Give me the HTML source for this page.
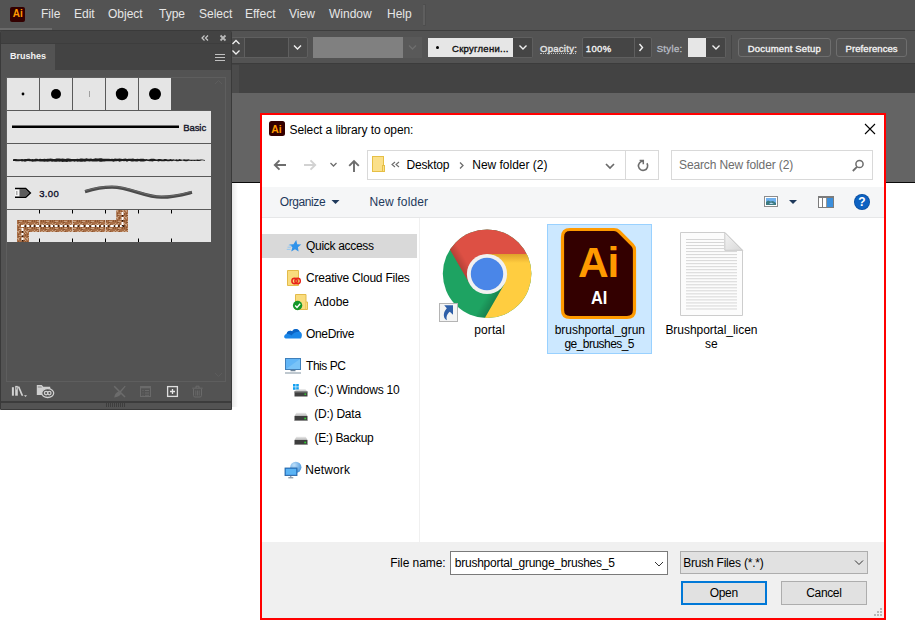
<!DOCTYPE html>
<html><head><meta charset="utf-8">
<style>
*{box-sizing:border-box}
html,body{margin:0;padding:0}
body{width:915px;height:639px;overflow:hidden;position:relative;background:#fff;font-family:"Liberation Sans",sans-serif}
.a{position:absolute}
.t{position:absolute;white-space:nowrap;line-height:1}
.ai{-webkit-text-stroke:0.35px currentColor}
svg{position:absolute;overflow:visible}
</style></head><body>

<!-- ===== Illustrator app frame ===== -->
<div class="a" style="left:0;top:0;width:915px;height:30px;background:#535353"></div>
<div class="a" style="left:0;top:30px;width:915px;height:1px;background:#3e3e3e"></div>
<div class="a" style="left:0;top:31px;width:915px;height:32px;background:#535353"></div>
<div class="a" style="left:0;top:63px;width:915px;height:1px;background:#3c3c3c"></div>
<div class="a" style="left:0;top:64px;width:915px;height:29px;background:#434343"></div>
<div class="a" style="left:232px;top:65px;width:7px;height:28px;background:#4b4b4b"></div>
<div class="a" style="left:0;top:93px;width:915px;height:89px;background:#646464"></div>
<div class="a" style="left:0;top:182px;width:915px;height:1px;background:#0a0a0a"></div>
<div class="a" style="left:232px;top:183px;width:6px;height:224px;background:linear-gradient(to right,rgba(0,0,0,0.09),rgba(0,0,0,0))"></div>

<!-- menu bar -->
<div class="a" style="left:10px;top:7px;width:15px;height:15px;background:#330000;border-radius:2px"></div>
<div class="t" style="left:12.8px;top:9.3px;font-size:10px;font-weight:bold;color:#ff9a00">Ai</div>
<div id="menu" style="color:#e6e6e6;font-size:12px">
<div class="t" style="left:41px;top:8px">File</div>
<div class="t" style="left:74px;top:8px">Edit</div>
<div class="t" style="left:108px;top:8px">Object</div>
<div class="t" style="left:159px;top:8px">Type</div>
<div class="t" style="left:199px;top:8px">Select</div>
<div class="t" style="left:245px;top:8px">Effect</div>
<div class="t" style="left:289px;top:8px">View</div>
<div class="t" style="left:329px;top:8px">Window</div>
<div class="t" style="left:387px;top:8px">Help</div>
</div>
<div class="a" style="left:422.5px;top:4px;width:3px;height:22px;background:#4d4d4d;border-radius:1px"></div><div class="a" style="left:423px;top:5px;width:2px;height:20px;background:#5e5e5e"></div>
<div class="a" style="left:0;top:28px;width:52px;height:2px;background:#6a6a6a"></div>

<!-- control bar -->
<div class="a" style="left:231px;top:37px;width:77px;height:21px;border:1px solid #5f5f5f;border-radius:2px;background:#4a4a4a"></div>
<div class="a" style="left:244px;top:38px;width:45px;height:19px;background:#434343;border-left:1px solid #5f5f5f;border-right:1px solid #5f5f5f"></div>
<svg style="left:0;top:0" width="915" height="64">
 <polyline points="232.5,44 236,40.5 239.5,44" fill="none" stroke="#f0f0f0" stroke-width="1.3"/>
 <polyline points="232.5,50.5 236,54 239.5,50.5" fill="none" stroke="#f0f0f0" stroke-width="1.3"/>
 <polyline points="294,45.5 297.5,49 301,45.5" fill="none" stroke="#f0f0f0" stroke-width="1.4"/>
</svg>
<div class="a" style="left:313px;top:37px;width:90px;height:21px;background:#808080"></div>
<div class="a" style="left:403px;top:37px;width:19px;height:21px;background:#595959"></div>
<svg style="left:0;top:0" width="915" height="64">
 <polyline points="409,45.5 412.5,49 416,45.5" fill="none" stroke="#6e6e6e" stroke-width="1.4"/>
</svg>
<div class="a" style="left:428px;top:38px;width:86px;height:19px;background:#e6e6e6"></div>
<div class="a" style="left:436px;top:46px;width:3px;height:3px;background:#000;border-radius:50%"></div>
<div class="t ai" style="left:452px;top:44px;font-size:9.5px;letter-spacing:0.27px;color:#101010">Скруглени...</div>
<div class="a" style="left:513px;top:37px;width:20px;height:21px;border:1px solid #5f5f5f;border-left:none;border-radius:0 2px 2px 0;background:#454545"></div>
<svg style="left:0;top:0" width="915" height="64">
 <polyline points="519.5,45.5 523,49 526.5,45.5" fill="none" stroke="#f0f0f0" stroke-width="1.4"/>
</svg>
<div class="t ai" style="left:540px;top:44px;font-size:9.5px;letter-spacing:0.28px;color:#e4e4e4">Opacity:</div>
<div class="a" style="left:540px;top:53px;width:36px;height:1px;border-top:1px dotted #bdbdbd"></div>
<div class="a" style="left:582px;top:37px;width:70px;height:21px;border:1px solid #5f5f5f;border-radius:2px;background:#454545"></div>
<div class="a" style="left:634px;top:38px;width:1px;height:19px;background:#5f5f5f"></div>
<div class="t ai" style="left:585.8px;top:44px;font-size:9.5px;letter-spacing:0.33px;color:#f4f4f4">100%</div>
<svg style="left:0;top:0" width="915" height="64">
 <polyline points="639.5,44 642.5,47.5 639.5,51" fill="none" stroke="#f0f0f0" stroke-width="1.4"/>
</svg>
<div class="t ai" style="left:656.7px;top:44px;font-size:9.5px;letter-spacing:0.34px;color:#b6bac2">Style:</div>
<div class="a" style="left:688px;top:38px;width:19px;height:19px;background:#e6e6e6"></div>
<div class="a" style="left:706px;top:37px;width:20px;height:21px;border:1px solid #5f5f5f;border-left:none;border-radius:0 2px 2px 0;background:#454545"></div>
<svg style="left:0;top:0" width="915" height="64">
 <polyline points="712.5,45.5 716,49 719.5,45.5" fill="none" stroke="#f0f0f0" stroke-width="1.4"/>
</svg>
<div class="a" style="left:731px;top:35px;width:1px;height:24px;background:#464646"></div>
<div class="a" style="left:738px;top:38px;width:93px;height:19px;border:1px solid #6e6e6e;border-radius:3px"></div>
<div class="t ai" style="left:747.8px;top:44px;font-size:9.5px;letter-spacing:0.17px;color:#f2f2f2">Document Setup</div>
<div class="a" style="left:836px;top:38px;width:71px;height:19px;border:1px solid #6e6e6e;border-radius:3px"></div>
<div class="t ai" style="left:845.6px;top:44px;font-size:9.5px;letter-spacing:0.08px;color:#f2f2f2">Preferences</div>

<!-- ===== Brushes panel ===== -->
<div class="a" style="left:0;top:30px;width:232px;height:380px;background:#535353;border:1px solid #3a3a3a;border-radius:3px 3px 0 0"></div>
<div class="a" style="left:1px;top:31px;width:230px;height:12px;background:#434343;border-radius:2px 2px 0 0"></div>
<div class="a" style="left:1px;top:43px;width:230px;height:1px;background:#3d3d3d"></div>
<div class="a" style="left:55px;top:44px;width:176px;height:26px;background:#434343"></div>
<div class="t" style="left:10px;top:52.3px;font-size:9px;font-weight:bold;color:#f2f2f2">Brushes</div>
<svg style="left:0;top:0" width="232" height="410">
 <!-- collapse << -->
 <polyline points="204.5,35.5 202,38 204.5,40.5" fill="none" stroke="#c8c8c8" stroke-width="1.2"/>
 <polyline points="208,35.5 205.5,38 208,40.5" fill="none" stroke="#c8c8c8" stroke-width="1.2"/>
 <!-- close x -->
 <path d="M220.5,35.5 L225.5,40.5 M225.5,35.5 L220.5,40.5" stroke="#b8b8b8" stroke-width="1.8"/>
 <!-- hamburger -->
 <path d="M215,54.5 H225 M215,57.5 H225 M215,60.5 H225" stroke="#c0c0c0" stroke-width="1"/>
</svg>
<!-- scroll area border -->
<div class="a" style="left:6px;top:77px;width:220px;height:305px;border:1px solid #5e5e5e"></div>
<svg style="left:0;top:0" width="232" height="410">
 <polyline points="215,84 218.5,80.5 222,84" fill="none" stroke="#5c5c5c" stroke-width="1"/>
 <polyline points="215,373 218.5,376.5 222,373" fill="none" stroke="#5c5c5c" stroke-width="1"/>
</svg>
<!-- brush cells -->
<div class="a" style="left:7px;top:78px;width:164px;height:32px;background:#e5e5e5"></div>
<div class="a" style="left:39px;top:78px;width:1px;height:32px;background:#5a5a5a"></div>
<div class="a" style="left:72px;top:78px;width:1px;height:32px;background:#5a5a5a"></div>
<div class="a" style="left:105px;top:78px;width:1px;height:32px;background:#5a5a5a"></div>
<div class="a" style="left:138px;top:78px;width:1px;height:32px;background:#5a5a5a"></div>
<svg style="left:0;top:0" width="232" height="410">
 <circle cx="23" cy="94" r="1.4" fill="#000"/>
 <circle cx="56" cy="94" r="5" fill="#000"/>
 <line x1="89.5" y1="91" x2="89.5" y2="97" stroke="#a0a0a0" stroke-width="1"/>
 <circle cx="122" cy="94" r="6.2" fill="#000"/>
 <circle cx="155" cy="94" r="6" fill="#000"/>
</svg>
<!-- list rows -->
<div class="a" style="left:7px;top:110px;width:204px;height:132px;background:#e5e5e5"></div>
<div class="a" style="left:7px;top:110px;width:204px;height:1px;background:#595959"></div>
<div class="a" style="left:7px;top:143px;width:204px;height:1px;background:#595959"></div>
<div class="a" style="left:7px;top:176px;width:204px;height:1px;background:#595959"></div>
<div class="a" style="left:7px;top:209px;width:204px;height:1px;background:#595959"></div>
<div class="t ai" style="left:183.3px;top:123px;font-size:9.5px;letter-spacing:-0.1px;color:#141428">Basic</div>
<div class="t ai" style="left:39.2px;top:189px;font-size:9.5px;letter-spacing:0.33px;color:#10102a">3.00</div>
<svg style="left:0;top:0" width="232" height="410">
 <rect x="12" y="125.5" width="167" height="2.5" fill="#000"/>
 <path d="M13.0,159.18 L14.5,158.94 L16.0,159.01 L17.5,159.34 L19.0,159.35 L20.5,159.32 L22.0,159.06 L23.5,159.26 L25.0,158.90 L26.5,158.93 L28.0,158.64 L29.5,158.71 L31.0,159.20 L32.5,159.07 L34.0,159.15 L35.5,158.82 L37.0,158.87 L38.5,159.20 L40.0,158.75 L41.5,159.00 L43.0,158.89 L44.5,158.63 L46.0,159.00 L47.5,158.79 L49.0,158.63 L50.5,158.39 L52.0,158.78 L53.5,158.97 L55.0,159.04 L56.5,158.53 L58.0,158.45 L59.5,158.57 L61.0,158.64 L62.5,158.45 L64.0,158.70 L65.5,158.99 L67.0,158.57 L68.5,158.44 L70.0,158.74 L71.5,158.99 L73.0,158.88 L74.5,158.95 L76.0,158.89 L77.5,158.70 L79.0,158.91 L80.5,158.58 L82.0,158.39 L83.5,158.76 L85.0,158.70 L86.5,158.27 L88.0,158.81 L89.5,158.77 L91.0,158.51 L92.5,158.92 L94.0,158.66 L95.5,158.25 L97.0,158.55 L98.5,158.44 L100.0,158.28 L101.5,158.29 L103.0,158.63 L104.5,158.83 L106.0,158.86 L107.5,158.75 L109.0,158.66 L110.5,158.91 L112.0,158.85 L113.5,158.92 L115.0,158.52 L116.5,158.79 L118.0,158.73 L119.5,158.41 L121.0,158.70 L122.5,158.98 L124.0,158.82 L125.5,158.50 L127.0,159.08 L128.5,158.75 L130.0,158.76 L131.5,158.79 L133.0,158.58 L134.5,159.02 L136.0,159.11 L137.5,158.87 L139.0,159.04 L140.5,158.72 L142.0,158.71 L143.5,158.76 L145.0,159.19 L146.5,159.12 L148.0,159.38 L149.5,159.24 L151.0,158.77 L152.5,158.80 L154.0,158.81 L155.5,159.35 L157.0,159.38 L158.5,159.11 L160.0,158.97 L161.5,159.13 L163.0,159.54 L164.5,158.98 L166.0,159.12 L167.5,159.53 L169.0,159.44 L170.5,159.02 L172.0,159.43 L173.5,159.22 L175.0,159.66 L176.5,159.13 L178.0,159.68 L179.5,159.11 L181.0,159.56 L182.5,159.73 L184.0,159.16 L185.5,159.48 L187.0,159.56 L188.5,159.30 L190.0,159.72 L191.5,159.74 L193.0,159.73 L194.5,159.84 L196.0,159.69 L197.5,159.54 L199.0,159.67 L200.5,159.62 L202.0,159.61 L203.5,159.68 L205.0,160.00 L205.0,160.86 L203.5,160.45 L202.0,160.35 L200.5,160.73 L199.0,161.02 L197.5,161.03 L196.0,160.74 L194.5,161.07 L193.0,160.75 L191.5,160.88 L190.0,160.70 L188.5,160.66 L187.0,161.14 L185.5,161.20 L184.0,161.01 L182.5,160.58 L181.0,160.97 L179.5,161.06 L178.0,161.20 L176.5,161.20 L175.0,160.75 L173.5,160.78 L172.0,161.34 L170.5,160.96 L169.0,161.26 L167.5,161.26 L166.0,161.06 L164.5,161.28 L163.0,161.20 L161.5,161.31 L160.0,161.10 L158.5,161.40 L157.0,160.92 L155.5,160.95 L154.0,161.06 L152.5,161.50 L151.0,161.13 L149.5,161.31 L148.0,161.03 L146.5,160.86 L145.0,161.21 L143.5,161.38 L142.0,161.43 L140.5,161.57 L139.0,161.04 L137.5,161.44 L136.0,161.44 L134.5,161.17 L133.0,161.41 L131.5,161.62 L130.0,160.96 L128.5,161.05 L127.0,161.63 L125.5,161.08 L124.0,161.17 L122.5,161.06 L121.0,161.34 L119.5,161.71 L118.0,161.11 L116.5,161.28 L115.0,161.16 L113.5,161.68 L112.0,161.34 L110.5,161.20 L109.0,161.14 L107.5,161.21 L106.0,161.15 L104.5,161.55 L103.0,161.38 L101.5,161.66 L100.0,161.65 L98.5,161.15 L97.0,161.54 L95.5,161.60 L94.0,161.52 L92.5,161.42 L91.0,161.31 L89.5,161.47 L88.0,161.30 L86.5,161.25 L85.0,161.77 L83.5,161.44 L82.0,161.76 L80.5,161.78 L79.0,161.49 L77.5,161.79 L76.0,161.36 L74.5,161.73 L73.0,161.28 L71.5,161.53 L70.0,161.68 L68.5,161.42 L67.0,161.92 L65.5,161.72 L64.0,161.70 L62.5,161.90 L61.0,161.57 L59.5,161.67 L58.0,161.48 L56.5,161.66 L55.0,161.74 L53.5,161.62 L52.0,161.81 L50.5,161.36 L49.0,161.43 L47.5,161.83 L46.0,161.61 L44.5,161.69 L43.0,161.40 L41.5,161.59 L40.0,161.47 L38.5,161.30 L37.0,161.19 L35.5,161.39 L34.0,161.53 L32.5,161.68 L31.0,161.18 L29.5,161.28 L28.0,161.10 L26.5,161.33 L25.0,161.70 L23.5,161.18 L22.0,161.58 L20.5,161.05 L19.0,161.28 L17.5,161.31 L16.0,161.19 L14.5,160.97 L13.0,161.01 Z" fill="#1c1c1c"/>
 <!-- calligraphic icon -->
 <rect x="15" y="189" width="4.5" height="8" fill="#f6f6f6"/>
 <path d="M19.5,189.2 H25.5 L29.6,192.9 L25.5,196.6 H19.5 Z" fill="#5c5c5c"/>
 <path d="M15,188.5 H25.7 L30.4,192.9 L25.7,197.3 H15" fill="none" stroke="#000" stroke-width="1.4"/>
 <rect x="16.2" y="191" width="1.2" height="4" fill="#9a9a9a"/>
 <!-- wave -->
 <path d="M85,191.6 C95,188.6 103,187.2 112,187.2 C130,187.4 145,197.2 161.3,197.2 C174,197.2 183,194.6 192,192.3" fill="none" stroke="#4a4a4a" stroke-width="3.2"/>
 <path d="M85,190.8 C95,187.8 103,186.4 112,186.4 C130,186.6 145,196.4 161.3,196.4 C174,196.4 183,193.8 192,191.5" fill="none" stroke="#6a6a6a" stroke-width="1"/>
 <!-- pattern brush ticks -->
 <path d="M39.5,210 V213.5 M72.5,210 V213.5 M105.5,210 V213.5 M138.5,210 V213.5 M171.5,210 V213.5 M39.5,238.5 V242 M72.5,238.5 V242 M105.5,238.5 V242 M138.5,238.5 V242 M171.5,238.5 V242" stroke="#000" stroke-width="1"/>
 <!-- pattern frame -->
 <defs><pattern id="tex" x="0" y="0" width="9" height="7" patternUnits="userSpaceOnUse"><rect width="9" height="7" fill="#a86e46"/><rect x="0" y="0" width="1" height="1" fill="#c8a080"/><rect x="2" y="0" width="1" height="1" fill="#8c5530"/><rect x="5" y="0" width="1" height="1" fill="#c8a080"/><rect x="6" y="0" width="1" height="1" fill="#c8a080"/><rect x="8" y="0" width="1" height="1" fill="#c8a080"/><rect x="0" y="1" width="1" height="1" fill="#c8a080"/><rect x="2" y="1" width="1" height="1" fill="#8c5530"/><rect x="4" y="1" width="1" height="1" fill="#8c5530"/><rect x="6" y="1" width="1" height="1" fill="#c8a080"/><rect x="3" y="2" width="1" height="1" fill="#c8a080"/><rect x="6" y="2" width="1" height="1" fill="#8c5530"/><rect x="7" y="2" width="1" height="1" fill="#c8a080"/><rect x="0" y="3" width="1" height="1" fill="#8c5530"/><rect x="5" y="3" width="1" height="1" fill="#8c5530"/><rect x="7" y="3" width="1" height="1" fill="#8c5530"/><rect x="1" y="4" width="1" height="1" fill="#c8a080"/><rect x="2" y="4" width="1" height="1" fill="#c8a080"/><rect x="3" y="4" width="1" height="1" fill="#c8a080"/><rect x="5" y="4" width="1" height="1" fill="#8c5530"/><rect x="7" y="4" width="1" height="1" fill="#8c5530"/><rect x="0" y="5" width="1" height="1" fill="#8c5530"/><rect x="1" y="5" width="1" height="1" fill="#8c5530"/><rect x="1" y="6" width="1" height="1" fill="#c8a080"/><rect x="7" y="6" width="1" height="1" fill="#c8a080"/></pattern></defs>
 <path d="M17,220 H116.2 V210 H128 V232 H29 V242 H17 Z" fill="url(#tex)"/>
 <path d="M39.5,220 V232 M72.5,220 V232 M105.5,220 V232" stroke="#e0c8b8" stroke-width="0.8"/>
 <rect x="21.0" y="225" width="3.5" height="2" fill="#fff"/><rect x="24.5" y="225.3" width="1.6" height="1.6" fill="#2a1206"/><rect x="26.6" y="225" width="3" height="2" fill="#fff"/><rect x="29.6" y="225.3" width="1.6" height="1.6" fill="#2a1206"/><rect x="31.2" y="225" width="2.5" height="2" fill="#fff"/><rect x="33.7" y="225.3" width="1.6" height="1.6" fill="#2a1206"/><rect x="35.8" y="225" width="3.5" height="2" fill="#fff"/><rect x="39.3" y="225.3" width="1.6" height="1.6" fill="#2a1206"/><rect x="41.4" y="225" width="2.5" height="2" fill="#fff"/><rect x="43.9" y="225.3" width="1.6" height="1.6" fill="#2a1206"/><rect x="46.0" y="225" width="2.5" height="2" fill="#fff"/><rect x="48.5" y="225.3" width="1.6" height="1.6" fill="#2a1206"/><rect x="50.6" y="225" width="2.5" height="2" fill="#fff"/><rect x="53.1" y="225.3" width="1.6" height="1.6" fill="#2a1206"/><rect x="54.7" y="225" width="3" height="2" fill="#fff"/><rect x="57.7" y="225.3" width="1.6" height="1.6" fill="#2a1206"/><rect x="59.8" y="225" width="3" height="2" fill="#fff"/><rect x="62.8" y="225.3" width="1.6" height="1.6" fill="#2a1206"/><rect x="64.4" y="225" width="2.5" height="2" fill="#fff"/><rect x="66.9" y="225.3" width="1.6" height="1.6" fill="#2a1206"/><rect x="69.5" y="225" width="3.5" height="2" fill="#fff"/><rect x="73.0" y="225.3" width="1.6" height="1.6" fill="#2a1206"/><rect x="74.6" y="225" width="3" height="2" fill="#fff"/><rect x="77.6" y="225.3" width="1.6" height="1.6" fill="#2a1206"/><rect x="80.2" y="225" width="3.5" height="2" fill="#fff"/><rect x="83.7" y="225.3" width="1.6" height="1.6" fill="#2a1206"/><rect x="85.8" y="225" width="3.5" height="2" fill="#fff"/><rect x="89.3" y="225.3" width="1.6" height="1.6" fill="#2a1206"/><rect x="91.4" y="225" width="3.5" height="2" fill="#fff"/><rect x="94.9" y="225.3" width="1.6" height="1.6" fill="#2a1206"/><rect x="96.5" y="225" width="2.5" height="2" fill="#fff"/><rect x="99.0" y="225.3" width="1.6" height="1.6" fill="#2a1206"/><rect x="101.1" y="225" width="2.5" height="2" fill="#fff"/><rect x="103.6" y="225.3" width="1.6" height="1.6" fill="#2a1206"/><rect x="105.2" y="225" width="2.5" height="2" fill="#fff"/><rect x="107.7" y="225.3" width="1.6" height="1.6" fill="#2a1206"/><rect x="110.3" y="225" width="3.5" height="2" fill="#fff"/><rect x="113.8" y="225.3" width="1.6" height="1.6" fill="#2a1206"/><rect x="115.4" y="225" width="2.5" height="2" fill="#fff"/><rect x="117.9" y="225.3" width="1.6" height="1.6" fill="#2a1206"/><rect x="120.0" y="225" width="3" height="2" fill="#fff"/><rect x="123.0" y="225.3" width="1.6" height="1.6" fill="#2a1206"/><rect x="21.5" y="228.0" width="2" height="3" fill="#fff"/><rect x="21.8" y="231.0" width="1.5" height="1.5" fill="#2a1206"/><rect x="21.5" y="233.0" width="2" height="2.5" fill="#fff"/><rect x="21.8" y="235.5" width="1.5" height="1.5" fill="#2a1206"/><rect x="21.5" y="237.5" width="2" height="2.5" fill="#fff"/><rect x="21.8" y="240.0" width="1.5" height="1.5" fill="#2a1206"/><rect x="121.5" y="212.0" width="2" height="3" fill="#fff"/><rect x="121.8" y="215.0" width="1.5" height="1.5" fill="#2a1206"/><rect x="121.5" y="217.0" width="2" height="3" fill="#fff"/><rect x="121.8" y="220.0" width="1.5" height="1.5" fill="#2a1206"/><rect x="121.5" y="222.0" width="2" height="3" fill="#fff"/><rect x="121.8" y="225.0" width="1.5" height="1.5" fill="#2a1206"/>
</svg>
<!-- footer icons -->
<svg style="left:0;top:0" width="232" height="410">
 <!-- library -->
 <rect x="11.9" y="387.2" width="2" height="8.5" fill="#d2d2d2"/>
 <rect x="15.2" y="385.9" width="2.6" height="9.8" fill="#d2d2d2"/>
 <rect x="16.1" y="387.3" width="0.9" height="2.2" fill="#8a8a8a"/>
 <path d="M17.6,386.6 H19.4 L23.3,395.7 H21.5 Z" fill="#d2d2d2"/>
 <path d="M24,395.2 H27 L25.5,396.9 Z" fill="#d2d2d2"/>
 <!-- CC folder -->
 <path d="M36.8,385 H41.8 L43.3,386.8 H50.2 V395 H36.8 Z" fill="#cfcfcf"/>
 <path d="M37.8,386.6 H41.3 L42,387.5 H37.8 Z" fill="#8a8a8a"/>
 <ellipse cx="47.7" cy="393.1" rx="6" ry="4.4" fill="#535353" stroke="#cfcfcf" stroke-width="1.3"/>
 <circle cx="46.1" cy="393.1" r="1.7" fill="none" stroke="#cfcfcf" stroke-width="1.3"/>
 <circle cx="49.3" cy="393.1" r="1.7" fill="none" stroke="#cfcfcf" stroke-width="1.3"/>
 <!-- remove brush stroke (disabled) -->
 <path d="M114.2,386.2 L125,397" stroke="#6c6c6c" stroke-width="1.5"/>
 <path d="M124.8,385.8 L125.6,386.6 L120.5,392.8 L119.4,391.7 Z" fill="#6c6c6c"/>
 <path d="M118.6,391.2 L121.2,393.8 C119.8,396 117.5,397.2 114.2,397.4 C114.6,394.5 116,392.6 118.6,391.2 Z" fill="#6c6c6c"/>
 <!-- options (disabled) -->
 <rect x="140.5" y="386.5" width="10" height="10" fill="none" stroke="#6a6a6a" stroke-width="1"/>
 <rect x="140.5" y="386.5" width="10" height="1.8" fill="#6a6a6a"/>
 <path d="M142.5,390.5 H143.5 M145,390.5 H149 M142.5,393 H143.5 M145,393 H149 M142.5,395.3 H143.5 M145,395.3 H149" stroke="#6a6a6a" stroke-width="1"/>
 <!-- new brush -->
 <rect x="167.6" y="386.6" width="9.8" height="9.8" fill="none" stroke="#dedede" stroke-width="1.3"/>
 <path d="M172.5,389 V394 M170,391.5 H175" stroke="#e6e6e6" stroke-width="1.3"/>
 <!-- trash (disabled) -->
 <path d="M192.3,388.2 H202.7 M196,388.2 V386.2 H199 V388.2" fill="none" stroke="#6a6a6a" stroke-width="1"/>
 <path d="M193.5,389 V395.5 Q193.5,397 195,397 H200 Q201.5,397 201.5,395.5 V389" fill="none" stroke="#6a6a6a" stroke-width="1"/>
 <path d="M195.8,390.5 V395.5 M197.5,390.5 V395.5 M199.2,390.5 V395.5" stroke="#6a6a6a" stroke-width="0.9"/>
</svg>
<div class="a" style="left:1px;top:401px;width:230px;height:2px;background:#3c3c3c"></div>
<div class="a" style="left:1px;top:403px;width:230px;height:6px;background:#535353"></div>
<svg style="left:0;top:0" width="232" height="410">
 <path d="M106.5,403 V407 M108.5,403 V407 M110.5,403 V407 M112.5,403 V407 M114.5,403 V407 M116.5,403 V407 M118.5,403 V407 M120.5,403 V407 M122.5,403 V407 M124.5,403 V407" stroke="#3e3e3e" stroke-width="1"/>
</svg>

<!-- ===== Dialog ===== -->
<div class="a" style="left:260px;top:113px;width:626px;height:507px;border:2px solid #ff0000;background:#fff"></div>
<!-- title -->
<div class="a" style="left:269px;top:121px;width:16px;height:15px;background:#330000;border-radius:2.5px"></div>
<div class="t" style="left:271.2px;top:123.5px;font-size:10.5px;font-weight:bold;color:#ff9a00">Ai</div>
<div class="t" style="left:289.5px;top:124px;font-size:12px;letter-spacing:-0.09px;color:#000;">Select a library to open:</div>
<svg style="left:0;top:0" width="915" height="639">
 <path d="M865,124 L875,134 M875,124 L865,134" stroke="#000" stroke-width="1.1"/>
 <!-- nav arrows -->
 <path d="M275,165 H286 M279.5,160.3 L274.8,165 L279.5,169.7" fill="none" stroke="#6d6d6d" stroke-width="1.9"/>
 <path d="M304,165 H315 M310.5,160.3 L315.2,165 L310.5,169.7" fill="none" stroke="#d2d2d2" stroke-width="1.9"/>
 <polyline points="330.5,163 333.5,166 336.5,163" fill="none" stroke="#6d6d6d" stroke-width="1.3"/>
 <path d="M354,161 V172 M349.2,165.8 L354,161 L358.8,165.8" fill="none" stroke="#6d6d6d" stroke-width="1.9"/>
</svg>
<!-- address bar -->
<div class="a" style="left:367px;top:150px;width:292px;height:30px;border:1px solid #d9d9d9"></div>
<div class="a" style="left:625px;top:151px;width:1px;height:28px;background:#d9d9d9"></div>
<svg style="left:0;top:0" width="915" height="639">
 <rect x="372.5" y="156.5" width="11" height="15" fill="#fbe08a" stroke="#e6bf45" stroke-width="1"/>
 <rect x="382.5" y="165.5" width="2" height="6" fill="#fbe08a" stroke="#e6bf45" stroke-width="1"/>
 <polyline points="395,162 392,164.5 395,167" fill="none" stroke="#6d6d6d" stroke-width="1.1"/>
 <polyline points="399,162 396,164.5 399,167" fill="none" stroke="#6d6d6d" stroke-width="1.1"/>
 <polyline points="460,162.5 463,165.5 460,168.5" fill="none" stroke="#6d6d6d" stroke-width="1.3"/>
 <polyline points="606,164 610,168 614,164" fill="none" stroke="#6a6a6a" stroke-width="1.7"/>
 <path d="M643,161.2 A4.6,4.6 0 1 0 646.9,163.3" fill="none" stroke="#6d6d6d" stroke-width="1.6"/>
 <path d="M639.6,160.6 H643.3 V164.3" fill="none" stroke="#6d6d6d" stroke-width="1.5"/>
</svg>
<div class="t" style="left:406.5px;top:159px;font-size:12px;letter-spacing:-0.17px;color:#000;">Desktop</div>
<div class="t" style="left:472.3px;top:159px;font-size:12px;letter-spacing:-0.02px;color:#000;">New folder (2)</div>
<!-- search -->
<div class="a" style="left:671px;top:150px;width:202px;height:30px;border:1px solid #d9d9d9"></div>
<div class="t" style="left:679px;top:159px;font-size:12px;letter-spacing:-0.125px;color:#6d6d6d;">Search New folder (2)</div>
<svg style="left:0;top:0" width="915" height="639">
 <circle cx="859.5" cy="164" r="3.6" fill="none" stroke="#6d6d6d" stroke-width="1.5"/>
 <path d="M857,166.8 L852.8,171" stroke="#6d6d6d" stroke-width="1.8"/>
</svg>
<!-- toolbar -->
<div class="a" style="left:262px;top:187px;width:622px;height:31px;background:#f5f6f7;border-bottom:1px solid #e6e7e8"></div>
<div class="t" style="left:279.7px;top:196px;font-size:12px;letter-spacing:-0.39px;color:#1e395b;">Organize</div>
<div class="t" style="left:369.5px;top:196px;font-size:12px;letter-spacing:0.13px;color:#1e395b;">New folder</div>
<svg style="left:0;top:0" width="915" height="639">
 <path d="M331.5,200 H339.5 L335.5,204 Z" fill="#1e395b"/>
 <!-- view icon -->
 <rect x="764.5" y="196.5" width="13" height="10" fill="#fff" stroke="#8c8c8c" stroke-width="1"/>
 <rect x="766" y="198" width="10" height="7" fill="#6fb0ee"/>
 <path d="M766,202 L768,200.5 L770.5,201.5 L773,201 L776,203 V205 H766 Z" fill="#3d7a80"/>
 <path d="M769,204 L771,202.5 L774,204 Z" fill="#b8d8f0"/>
 <path d="M789,200 H797 L793,204 Z" fill="#1e395b"/>
 <!-- preview pane icon -->
 <rect x="818.5" y="196.5" width="15" height="11" fill="#fff" stroke="#7c7c7c" stroke-width="1"/>
 <rect x="819" y="197" width="14" height="1" fill="#7c7c7c"/>
 <rect x="827" y="198" width="6" height="9" fill="#3b8fdc"/>
 <line x1="822.5" y1="198" x2="822.5" y2="207" stroke="#7c7c7c" stroke-width="1"/>
 <line x1="826.5" y1="198" x2="826.5" y2="207" stroke="#7c7c7c" stroke-width="0.8"/>
 <!-- help -->
 <circle cx="862" cy="202" r="8" fill="#0a4fa0"/>
 <circle cx="862" cy="202" r="7.2" fill="#0d62c2"/>
</svg>
<div class="t" style="left:858.3px;top:195.8px;font-size:12px;font-weight:bold;color:#fff">?</div>
<!-- nav pane -->
<div class="a" style="left:419px;top:218px;width:1px;height:324px;background:#f0f0f0"></div>
<div class="a" style="left:262px;top:234px;width:155px;height:24px;background:#d9d9d9"></div>
<div id="navtext" style="color:#000">
<div class="t" style="left:306px;top:240px;font-size:12px;letter-spacing:-0.31px;">Quick access</div>
<div class="t" style="left:306px;top:272px;font-size:12px;letter-spacing:-0.22px;">Creative Cloud Files</div>
<div class="t" style="left:314.3px;top:296px;font-size:12px;letter-spacing:0px;">Adobe</div>
<div class="t" style="left:306px;top:328px;font-size:12px;letter-spacing:-0.33px;">OneDrive</div>
<div class="t" style="left:306px;top:360px;font-size:12px;letter-spacing:-0.45px;">This PC</div>
<div class="t" style="left:314.3px;top:384px;font-size:12px;letter-spacing:-0.24px;">(C:) Windows 10</div>
<div class="t" style="left:314.3px;top:408px;font-size:12px;letter-spacing:-0.24px;">(D:) Data</div>
<div class="t" style="left:314.5px;top:432px;font-size:12px;letter-spacing:-0.35px;">(E:) Backup</div>
<div class="t" style="left:305.3px;top:464px;font-size:12px;letter-spacing:0.1px;">Network</div>
</div>
<svg style="left:0;top:0" width="915" height="639">
 <!-- quick access star -->
 <path d="M296.2,240 L297.2,244.3 L301.2,244.5 L297.9,247.2 L298.6,251.5 L295,249.2 L291.2,251.5 L292.4,247.2 L289.3,244.5 L293.5,244.3 Z" fill="#2f93ea"/>
 <path d="M287.5,247.2 H291 M286.8,249.4 H290.5 M288.8,245.2 H291.5" stroke="#8cc4f2" stroke-width="0.9"/>
 <!-- CC folder -->
 <path d="M287.5,270.5 H298.5 V285.5 H287.5 Z" fill="#f9dc7e" stroke="#e3bb4a" stroke-width="1"/>
 <circle cx="294.6" cy="281" r="2.7" fill="none" stroke="#e8241a" stroke-width="1.5"/>
 <circle cx="297.6" cy="281" r="2.7" fill="none" stroke="#e8241a" stroke-width="1.5"/>
 <!-- Adobe folder -->
 <path d="M295.5,294.5 H306 V309.5 H295.5 Z" fill="#f9dc7e" stroke="#e3bb4a" stroke-width="1"/>
 <path d="M306,302 H307.5 V309.5 H306" fill="#f9dc7e" stroke="#e3bb4a" stroke-width="1"/>
 <circle cx="297.6" cy="305.5" r="4.7" fill="#15972a"/>
 <path d="M295.2,305.6 L297,307.4 L300.2,303.8" fill="none" stroke="#fff" stroke-width="1.4"/>
 <!-- OneDrive -->
 <path d="M285.8,338.6 C283.6,338.6 283.4,334.6 286.6,334.1 C287.1,331.2 290.2,330.1 292.3,331.4 C293.8,328.4 298.4,328.2 299.7,331.8 C302.2,332.2 302.6,336.4 300.8,338.6 Z" fill="#1a86e8"/>
 <path d="M286.6,334.1 C287.1,331.2 290.2,330.1 292.3,331.4 C293.8,328.4 298.4,328.2 299.7,331.8 C296,331.5 293,333 291.5,335.5 C290,334.5 288,334 286.6,334.1 Z" fill="#0b63c4"/>
 <!-- This PC -->
 <rect x="285.5" y="358.5" width="15" height="11" fill="#62b6f7" stroke="#3f7fba" stroke-width="1"/>
 <path d="M286,369 L300,359 V369 Z" fill="#8fd0fa" opacity="0.5"/>
 <path d="M290.5,370.5 H295.5" stroke="#6d8296" stroke-width="1.5"/>
 <path d="M285,373 H301" stroke="#95a3b0" stroke-width="1.2"/>
 <!-- C drive -->
 <rect x="293" y="384" width="2.6" height="2.6" fill="#14a0f0"/><rect x="296.2" y="384" width="2.6" height="2.6" fill="#14a0f0"/>
 <rect x="293" y="387.2" width="2.6" height="2.6" fill="#14a0f0"/><rect x="296.2" y="387.2" width="2.6" height="2.6" fill="#14a0f0"/>
 <path d="M294.5,391.5 L296.5,389.5 H305.5 L307.5,391.5 Z" fill="#d0d0d0"/>
 <rect x="294.5" y="391.5" width="13" height="5" fill="#404040"/>
 <rect x="294.5" y="391.5" width="13" height="1" fill="#7a7a7a"/>
 <rect x="304.5" y="393.5" width="1.6" height="1.4" fill="#2ed52e"/>
 <!-- D drive -->
 <defs><linearGradient id="drvtop" x1="0" y1="0" x2="0" y2="1"><stop offset="0" stop-color="#ececec"/><stop offset="1" stop-color="#b4b4b4"/></linearGradient>
 <radialGradient id="globe" cx="0.35" cy="0.3" r="0.8"><stop offset="0" stop-color="#bfe0fa"/><stop offset="1" stop-color="#3f8fd8"/></radialGradient></defs>
 <path d="M294.5,416.0 L296.3,412.7 H305.7 L307.5,416.0 Z" fill="url(#drvtop)"/>
 <rect x="294.5" y="416.0" width="13" height="4.6" fill="#3e3e3e"/>
 <rect x="294.5" y="420.09999999999997" width="13" height="0.8" fill="#8a8a8a"/>
 <rect x="304.3" y="417.7" width="1.8" height="1.6" fill="#2ed52e"/>
 <!-- E drive -->
 <path d="M294.5,440.0 L296.3,436.7 H305.7 L307.5,440.0 Z" fill="url(#drvtop)"/>
 <rect x="294.5" y="440.0" width="13" height="4.6" fill="#3e3e3e"/>
 <rect x="294.5" y="444.09999999999997" width="13" height="0.8" fill="#8a8a8a"/>
 <rect x="304.3" y="441.7" width="1.8" height="1.6" fill="#2ed52e"/>
 <!-- Network -->
 <circle cx="295.8" cy="467.3" r="5.6" fill="url(#globe)"/>
 <rect x="285" y="468" width="12" height="7.6" fill="#3a8ee0" stroke="#22609e" stroke-width="0.8"/>
 <rect x="286" y="469" width="10" height="5.6" fill="#5bb4f4"/>
 <path d="M290.8,476 V477.2 M288.3,477.8 H293.3" stroke="#6a7a8a" stroke-width="1"/>
</svg>
<!-- files -->
<svg style="left:0;top:0" width="915" height="639">
 <defs>
  <clipPath id="cc"><circle cx="487.1" cy="273.8" r="44.3"/></clipPath>
  <linearGradient id="shR" gradientUnits="userSpaceOnUse" x1="460" y1="268" x2="467.8" y2="263.5"><stop offset="0" stop-color="#000" stop-opacity="0.2"/><stop offset="1" stop-color="#000" stop-opacity="0"/></linearGradient>
  <linearGradient id="shY" gradientUnits="userSpaceOnUse" x1="0" y1="254" x2="0" y2="263"><stop offset="0" stop-color="#b86a10" stop-opacity="0.45"/><stop offset="1" stop-color="#b86a10" stop-opacity="0"/></linearGradient>
  <linearGradient id="shG" gradientUnits="userSpaceOnUse" x1="490" y1="309" x2="481.5" y2="304"><stop offset="0" stop-color="#000" stop-opacity="0.2"/><stop offset="1" stop-color="#000" stop-opacity="0"/></linearGradient>
 </defs>
 <g clip-path="url(#cc)">
  <rect x="440" y="226" width="95" height="95" fill="#1ea362"/>
  <path d="M469.8,284 L429.8,214.7 L429.8,180 L545,180 L545,254 L487,254 Z" fill="#dd5044"/>
  <path d="M469.8,284 L429.8,214.7 L445,206 L485,275 Z" fill="url(#shR)"/>
  <path d="M504.4,284 L474.4,336 L545,345 L545,254 L487,254 Z" fill="#ffcd40"/>
  <path d="M487,254 L545,254 L545,264 L492,264 Z" fill="url(#shY)"/>
  <path d="M504.4,284 L474.4,336 L460,328 L490,276 Z" fill="url(#shG)"/>
 </g>
 <circle cx="487" cy="274" r="20.1" fill="#f1f1f1"/>
 <circle cx="487" cy="274" r="16.2" fill="#4a86e8"/>
 <rect x="439.5" y="303.5" width="18" height="18" fill="#f4f4f4" stroke="#b4b4b4" stroke-width="1"/>
 <path d="M444.2,305.3 H453 V314.8 L449.8,311.8 C447.2,314 445.8,317 447,320.3 C443.5,318.5 442.2,313.5 446.8,308.2 Z" fill="#2f5fa8"/>
</svg>
<div class="t" style="left:474.3px;top:324px;font-size:12px;letter-spacing:0.1px;color:#000;">portal</div>
<div class="a" style="left:547px;top:224px;width:105px;height:130px;background:#cce8ff;border:1px solid #99d1ff"></div>
<svg style="left:0;top:0" width="915" height="639">
 <path d="M570,229.5 H614 Q617,229.5 619,231.5 L632.5,245 Q634.5,247 634.5,250 V310 Q634.5,317.5 627,317.5 H570 Q562.5,317.5 562.5,310 V237 Q562.5,229.5 570,229.5 Z" fill="#330000" stroke="#ff9a00" stroke-width="3.2"/>
</svg>
<div class="t" style="left:578px;top:242px;font-size:42.5px;font-weight:bold;color:#ff9a00;letter-spacing:-1.2px">Ai</div>
<div class="t" style="left:590.6px;top:288px;font-size:19px;font-weight:bold;color:#fff;transform:scaleX(0.86);transform-origin:0 0">AI</div>
<div class="t" style="left:554.7px;top:324px;font-size:12px;letter-spacing:-0.03px;color:#000;">brushportal_grun</div>
<div class="t" style="left:564.5px;top:338px;font-size:12px;letter-spacing:-0.55px;color:#000;">ge_brushes_5</div>
<svg style="left:0;top:0" width="915" height="639">
 <defs><linearGradient id="fold" x1="0" y1="0" x2="1" y2="1"><stop offset="0" stop-color="#f4f4f4"/><stop offset="1" stop-color="#d8d8d8"/></linearGradient></defs>
 <path d="M680.5,232.5 H724.8 L742.5,250.3 V315.5 H680.5 Z" fill="#fcfcfc" stroke="#cdcdcd" stroke-width="1"/>
 <path d="M724.8,232.5 V250.3 H742.5 Z" fill="url(#fold)" stroke="#c8c8c8" stroke-width="1"/>
 <path d="M686,239.50 H724 M686,242.52 H724 M686,245.54 H724 M686,248.56 H724 M686,251.58 H737 M686,254.60 H737 M686,257.62 H737 M686,260.64 H737 M686,263.66 H737 M686,266.68 H737 M686,269.70 H737 M686,272.72 H737 M686,275.74 H737 M686,278.76 H737 M686,281.78 H737 M686,284.80 H737 M686,287.82 H737 M686,290.84 H737 M686,293.86 H737 M686,296.88 H737 M686,299.90 H737 M686,302.92 H737 M686,305.94 H737 M686,308.96 H737" stroke="#d6d6d6" stroke-width="1"/>
</svg>
<div class="t" style="left:665.4px;top:324px;font-size:12px;letter-spacing:-0.04px;color:#000;">Brushportal_licen</div>
<div class="t" style="left:705px;top:338px;font-size:12px;letter-spacing:0px;color:#000;">se</div>
<!-- bottom panel -->
<div class="a" style="left:262px;top:542px;width:622px;height:76px;background:#f0f0f0"></div>
<div class="t" style="left:390.2px;top:557px;font-size:12px;letter-spacing:-0.06px;color:#000;">File name:</div>
<div class="a" style="left:450px;top:551px;width:218px;height:24px;background:#fff;border:1px solid #7a7a7a"></div>
<div class="t" style="left:454.8px;top:557px;font-size:12px;letter-spacing:-0.25px;color:#000;">brushportal_grunge_brushes_5</div>
<div class="a" style="left:680px;top:551px;width:188px;height:23px;background:#e1e1e1;border:1px solid #adadad"></div>
<div class="t" style="left:683.2px;top:557px;font-size:12px;letter-spacing:-0.22px;color:#000;">Brush Files (*.*)</div>
<div class="a" style="left:681px;top:581px;width:86px;height:24px;background:#e1e1e1;border:2px solid #0078d7"></div>
<div class="t" style="left:709.7px;top:587px;font-size:12px;letter-spacing:-0.33px;color:#000;">Open</div>
<div class="a" style="left:781px;top:581px;width:86px;height:24px;background:#e1e1e1;border:1px solid #adadad"></div>
<div class="t" style="left:806.3px;top:587px;font-size:12px;letter-spacing:-0.36px;color:#000;">Cancel</div>
<svg style="left:0;top:0" width="915" height="639">
 <polyline points="655,562 659,566 663,562" fill="none" stroke="#333" stroke-width="1"/>
 <polyline points="855,560.5 859,564.5 863,560.5" fill="none" stroke="#333" stroke-width="1"/>
 <g fill="#b8b8b8">
  <rect x="880" y="608" width="2" height="2"/>
  <rect x="877" y="611" width="2" height="2"/><rect x="880" y="611" width="2" height="2"/>
  <rect x="874" y="614" width="2" height="2"/><rect x="877" y="614" width="2" height="2"/><rect x="880" y="614" width="2" height="2"/>
 </g>
</svg>

</body></html>
